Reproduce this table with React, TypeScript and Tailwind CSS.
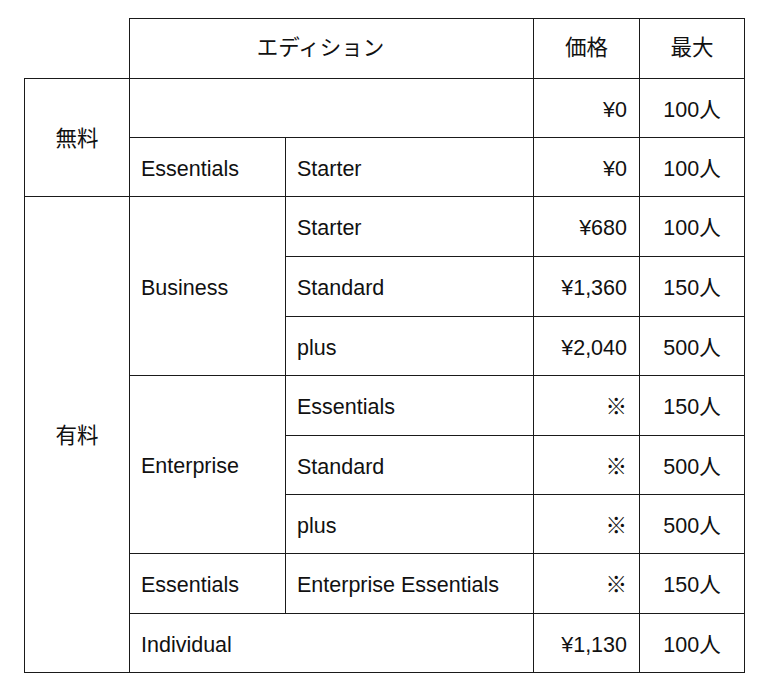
const font = {
  fontFamily: '"Liberation Sans", "Noto Sans CJK JP", sans-serif',
};

type Row = {
  label?: { text: string; span: number };
  group?: { text: string; span: number; colSpan?: number };
  edition?: string;
  price: string;
  max: string;
  h: number;
};

const rows: Row[] = [
  { label: { text: "無料", span: 2 }, group: { text: "", span: 1, colSpan: 2 }, price: "¥0", max: "100人", h: 59 },
  { group: { text: "Essentials", span: 1 }, edition: "Starter", price: "¥0", max: "100人", h: 59 },
  { label: { text: "有料", span: 8 }, group: { text: "Business", span: 3 }, edition: "Starter", price: "¥680", max: "100人", h: 60 },
  { edition: "Standard", price: "¥1,360", max: "150人", h: 60 },
  { edition: "plus", price: "¥2,040", max: "500人", h: 59 },
  { group: { text: "Enterprise", span: 3 }, edition: "Essentials", price: "※", max: "150人", h: 60 },
  { edition: "Standard", price: "※", max: "500人", h: 59 },
  { edition: "plus", price: "※", max: "500人", h: 59 },
  { group: { text: "Essentials", span: 1 }, edition: "Enterprise Essentials", price: "※", max: "150人", h: 60 },
  { group: { text: "Individual", span: 1, colSpan: 2 }, price: "¥1,130", max: "100人", h: 59 },
];

const cell = "border border-[#1a1a1a] p-0 align-middle";
const body = `${cell} pt-[5px]`;

export default function App() {
  return (
    <div className="min-h-screen bg-white pl-[24px] pt-[18px] text-[#111]" style={font}>
      <table className="w-[720px] table-fixed border-collapse text-[21.5px] leading-none">
        <colgroup>
          <col className="w-[105px]" />
          <col className="w-[156px]" />
          <col className="w-[248px]" />
          <col className="w-[106px]" />
          <col className="w-[105px]" />
        </colgroup>
        <thead>
          <tr className="h-[60px]">
            <th className="border-0 p-0" />
            <th colSpan={2} className={`${cell} pr-[22px] text-center font-normal`}>
              エディション
            </th>
            <th className={`${cell} text-center font-normal`}>価格</th>
            <th className={`${cell} text-center font-normal`}>最大</th>
          </tr>
        </thead>
        <tbody>
          {rows.map((r, i) => (
            <tr key={i} style={{ height: r.h }}>
              {r.label && (
                <td rowSpan={r.label.span} className={`${body} text-center`}>
                  {r.label.text}
                </td>
              )}
              {r.group && (
                <td
                  rowSpan={r.group.span}
                  colSpan={r.group.colSpan ?? 1}
                  className={`${body} pl-[11px] text-left`}
                >
                  {r.group.text}
                </td>
              )}
              {r.edition && <td className={`${body} pl-[11px] text-left`}>{r.edition}</td>}
              <td className={`${body} pr-[12px] text-right`}>{r.price}</td>
              <td className={`${body} text-center`}>{r.max}</td>
            </tr>
          ))}
        </tbody>
      </table>
    </div>
  );
}
